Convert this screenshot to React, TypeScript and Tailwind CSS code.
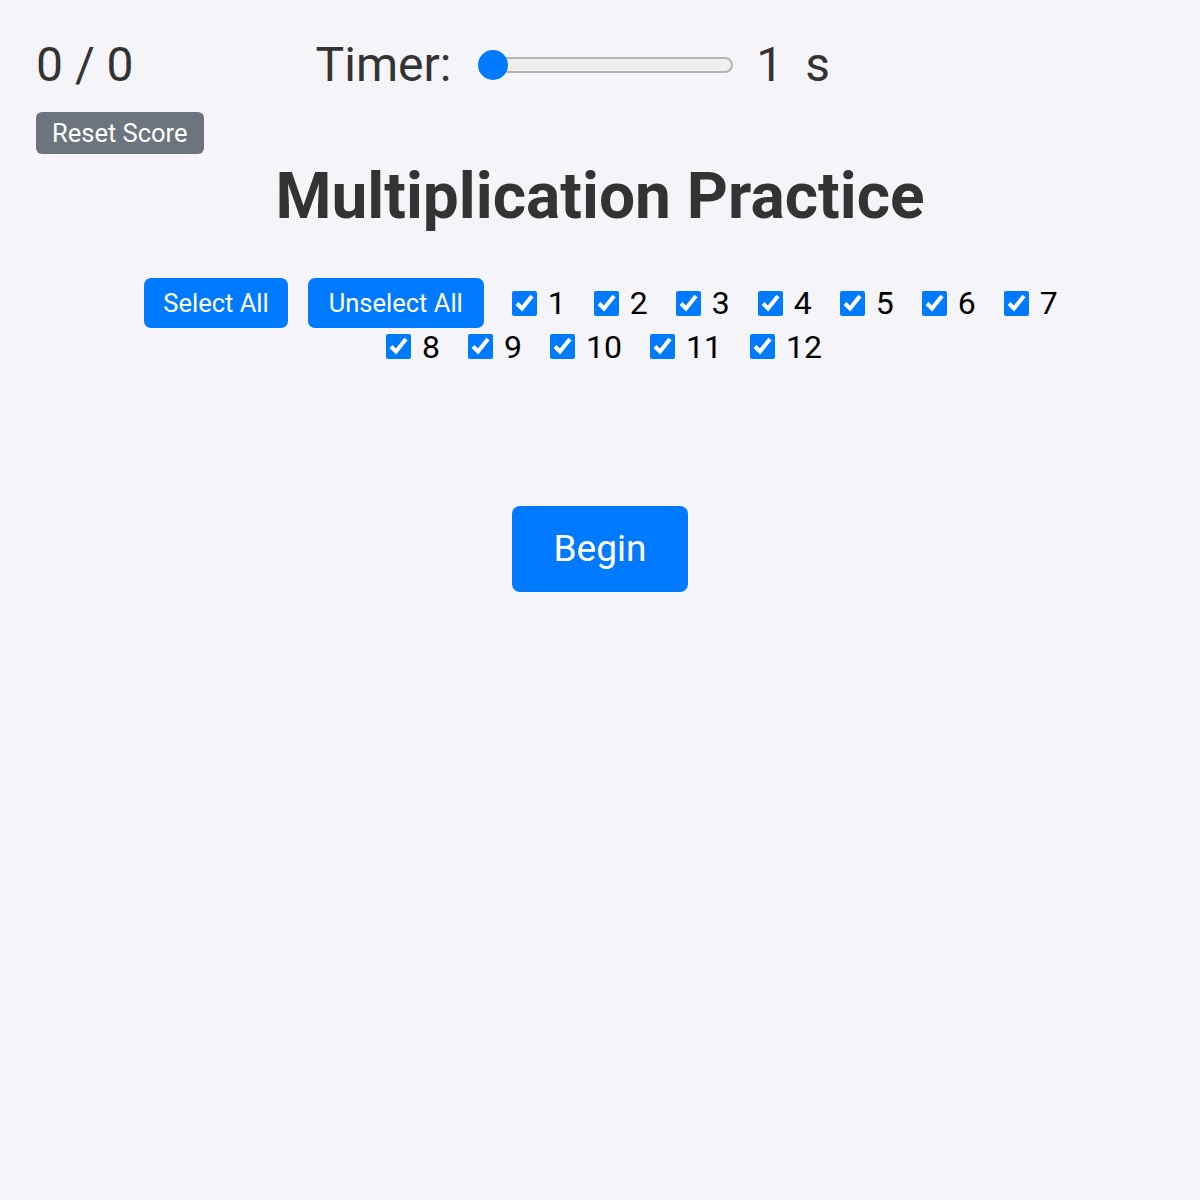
import { useState } from 'react'

const TABLES = [1, 2, 3, 4, 5, 6, 7, 8, 9, 10, 11, 12]

export default function App() {
    const [selected, setSelected] = useState<number[]>(TABLES)
    const [seconds] = useState(1)

    const toggle = (n: number) =>
        setSelected((prev) =>
            prev.includes(n) ? prev.filter((x) => x !== n) : [...prev, n]
        )

    return (
        <div
            className="min-h-[1200px] bg-[#f4f4f9] text-[#333333]"
            style={{ fontFamily: 'Roboto, "Noto Sans", sans-serif' }}
        >
            <div className="pl-[33px] pt-[37px]">
                {/* Score + timer */}
                <div className="flex items-center">
                    <div className="ml-[3px] text-[48px] leading-[56px]">0 / 0</div>
                    <div className="ml-[182px] flex items-center">
                        <span className="text-[48px] leading-[56px]">Timer:</span>
                        <div className="relative ml-[27px] h-[30px] w-[255px]">
                            <div className="absolute left-[1px] right-0 top-[7px] h-[16px] rounded-full border-2 border-[#b4b4b4] bg-[#efefef]" />
                            <div className="absolute left-0 top-0 h-[30px] w-[30px] rounded-full bg-[#007bff]" />
                        </div>
                        <span className="ml-[23px] text-[48px] leading-[56px]">{seconds}</span>
                        <span className="ml-[22px] text-[48px] leading-[56px]">s</span>
                    </div>
                </div>

                <button className="ml-[3px] mt-[19px] flex h-[42px] items-center rounded-[6px] bg-[#6c757d] px-[16px] text-[25.5px] text-white">
                    Reset Score
                </button>
            </div>

            <h1 className="mt-[5px] text-center text-[64px] font-bold leading-[75px] text-[#333333]">
                Multiplication Practice
            </h1>

            {/* Table selection */}
            <div className="mx-auto mt-[44px] flex w-[960px] flex-wrap items-center justify-center gap-x-[20px]">
                <button
                    className="ml-[2px] flex h-[50px] items-center rounded-[7px] bg-[#007bff] px-[19px] text-[25.5px] text-white"
                    onClick={() => setSelected(TABLES)}
                >
                    Select All
                </button>
                <button
                    className="flex h-[50px] items-center rounded-[7px] bg-[#007bff] px-[21px] text-[25.5px] text-white"
                    onClick={() => setSelected([])}
                >
                    Unselect All
                </button>
                {TABLES.map((n) => (
                    <label key={n} className="flex h-[37px] items-center">
                        <input
                            type="checkbox"
                            checked={selected.includes(n)}
                            onChange={() => toggle(n)}
                            className="m-0 ml-[8px] h-[25px] w-[25px] accent-[#007bff]"
                        />
                        <span className="ml-[11px] text-[32px] leading-none text-black">{n}</span>
                    </label>
                ))}
            </div>

            <div className="mt-[141px] flex justify-center">
                <button className="flex h-[86px] items-center rounded-[8px] bg-[#007bff] px-[42px] text-[37px] text-white">
                    Begin
                </button>
            </div>
        </div>
    )
}
